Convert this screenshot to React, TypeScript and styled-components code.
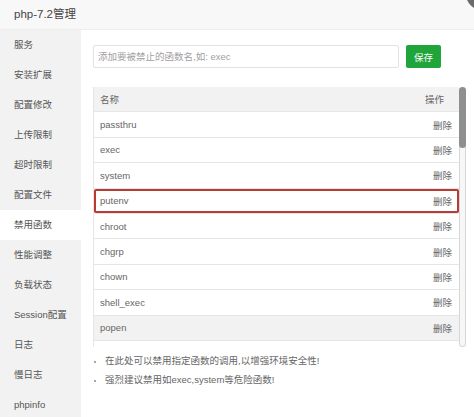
import React from "react";
import styled, { createGlobalStyle, css } from "styled-components";

const Global = createGlobalStyle`
  html, body { margin: 0; padding: 0; background: #fff; }
  body { font-family: "Liberation Sans", "Noto Sans CJK SC", Arial, sans-serif; }
  * { box-sizing: border-box; }
`;

const Window = styled.div`
  position: relative;
  width: 474px;
  height: 417px;
  overflow: hidden;
  display: flex;
  flex-direction: column;
  background: #fff;
`;

const TitleBar = styled.div`
  height: 30px;
  flex: none;
  background: #f8f8f8;
  border-bottom: 1px solid #eee;
  padding-left: 14px;
  line-height: 29px;
  font-size: 11.5px;
  font-weight: 400;
  color: #444;
`;

const CloseDot = styled.span`
  position: absolute;
  right: -24px;
  top: -22px;
  width: 32px;
  height: 32px;
  border-radius: 50%;
  background: #6b6b6b;
`;

const Body = styled.div`
  flex: 1;
  display: flex;
  min-height: 0;
`;

const Sidebar = styled.nav`
  width: 81px;
  flex: none;
  background: #f2f2f2;
  display: flex;
  flex-direction: column;
`;

const NavItem = styled.div<{ $active?: boolean }>`
  height: 30px;
  line-height: 30px;
  padding-left: 14px;
  font-size: 9.5px;
  color: #555;
  white-space: nowrap;
  ${(p) =>
    p.$active &&
    css`
      background: #fff;
    `}
`;

const Content = styled.main`
  flex: 1;
  padding: 15px 8px 0 12px;
  display: flex;
  flex-direction: column;
`;

const FormRow = styled.div`
  display: flex;
  gap: 7px;
  height: 23px;
`;

const Input = styled.input`
  width: 306px;
  height: 23px;
  border: 1px solid #e2e2e2;
  border-radius: 2px;
  padding: 0 4px;
  font-family: inherit;
  font-size: 9.5px;
  color: #333;
  outline: none;
  &::placeholder { color: #a0a0a0; }
`;

const SaveButton = styled.button`
  width: 35px;
  height: 23px;
  border: none;
  border-radius: 2px;
  background: #20a53a;
  color: #fff;
  font-family: inherit;
  font-size: 9.5px;
  padding: 0;
`;

const TableArea = styled.div`
  margin-top: 19px;
  display: flex;
  height: 260px;
`;

const Table = styled.div`
  width: 366px;
  height: 100%;
  border-left: 1px solid #e6e6e6;
  overflow: hidden;
`;

const ScrollTrack = styled.div`
  width: 7px;
  height: 100%;
  border-radius: 4px;
  background: #f7f7f7;
  box-shadow: inset 0 0 0 1px #d6d6d6;
  display: flex;
  flex-direction: column;
`;

const ScrollThumb = styled.div`
  height: 61px;
  border-radius: 4px;
  background: #8f8f8f;
`;

const Row = styled.div<{ $header?: boolean; $hover?: boolean; $marked?: boolean }>`
  display: flex;
  align-items: center;
  justify-content: space-between;
  height: 25.4px;
  padding: 0 7px 0 6px;
  border-bottom: 1px solid #e6e6e6;
  font-size: 9.5px;
  color: #666;
  background: ${(p) => (p.$header || p.$hover ? "#f2f2f2" : "#fff")};
  ${(p) =>
    p.$header &&
    css`
      padding-right: 15px;
    `}
  ${(p) =>
    p.$marked &&
    css`
      border-radius: 2px;
      box-shadow: inset 0 0 0 2px #b83b34;
    `}
`;

const Notes = styled.ul`
  margin: 4px 0 0;
  padding-left: 12px;
  list-style: disc;
  font-size: 9.5px;
  color: #666;
  li {
    line-height: 19px;
  }
  li::marker { color: #888; font-size: 8px; }
`;

const navItems = [
  "服务",
  "安装扩展",
  "配置修改",
  "上传限制",
  "超时限制",
  "配置文件",
  "禁用函数",
  "性能调整",
  "负载状态",
  "Session配置",
  "日志",
  "慢日志",
  "phpinfo",
];

const funcs = ["passthru", "exec", "system", "putenv", "chroot", "chgrp", "chown", "shell_exec", "popen"];

export default function App() {
  return (
    <>
      <Global />
      <Window>
        <TitleBar>php-7.2管理</TitleBar>
        <CloseDot />
        <Body>
          <Sidebar>
            {navItems.map((n) => (
              <NavItem key={n} $active={n === "禁用函数"}>
                {n}
              </NavItem>
            ))}
          </Sidebar>
          <Content>
            <FormRow>
              <Input placeholder="添加要被禁止的函数名,如: exec" />
              <SaveButton>保存</SaveButton>
            </FormRow>
            <TableArea>
              <Table>
                <Row $header>
                  <span>名称</span>
                  <span>操作</span>
                </Row>
                {funcs.map((f) => (
                  <Row key={f} $marked={f === "putenv"} $hover={f === "popen"}>
                    <span>{f}</span>
                    <span>删除</span>
                  </Row>
                ))}
              </Table>
              <ScrollTrack>
                <ScrollThumb />
              </ScrollTrack>
            </TableArea>
            <Notes>
              <li>在此处可以禁用指定函数的调用,以增强环境安全性!</li>
              <li>强烈建议禁用如exec,system等危险函数!</li>
            </Notes>
          </Content>
        </Body>
      </Window>
    </>
  );
}
